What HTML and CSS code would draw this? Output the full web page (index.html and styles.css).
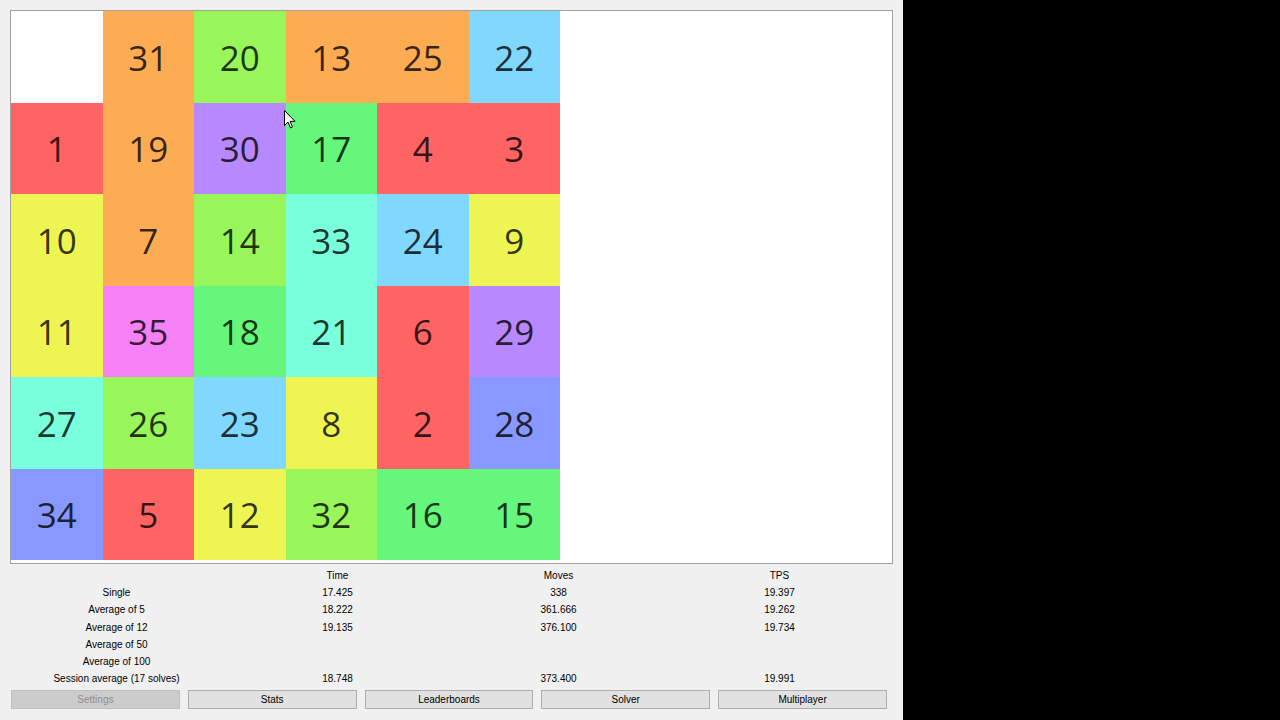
FILE: index.html
```html
<!DOCTYPE html>
<html>
<head>
<meta charset="utf-8">
<link rel="stylesheet" href="styles.css">
</head>
<body>
<div class="app">
  <div class="canvas">
    <div class="board">
      <div class="tile blank"></div>
      <div class="tile orange">31</div>
      <div class="tile lime">20</div>
      <div class="tile orange">13</div>
      <div class="tile orange">25</div>
      <div class="tile blue">22</div>

      <div class="tile red">1</div>
      <div class="tile orange">19</div>
      <div class="tile purple">30</div>
      <div class="tile green">17</div>
      <div class="tile red">4</div>
      <div class="tile red">3</div>

      <div class="tile yellow">10</div>
      <div class="tile orange">7</div>
      <div class="tile lime">14</div>
      <div class="tile cyan">33</div>
      <div class="tile blue">24</div>
      <div class="tile yellow">9</div>

      <div class="tile yellow">11</div>
      <div class="tile pink">35</div>
      <div class="tile green">18</div>
      <div class="tile cyan">21</div>
      <div class="tile red">6</div>
      <div class="tile purple">29</div>

      <div class="tile cyan">27</div>
      <div class="tile lime">26</div>
      <div class="tile blue">23</div>
      <div class="tile yellow">8</div>
      <div class="tile red">2</div>
      <div class="tile periwinkle">28</div>

      <div class="tile periwinkle">34</div>
      <div class="tile red">5</div>
      <div class="tile yellow">12</div>
      <div class="tile lime">32</div>
      <div class="tile green">16</div>
      <div class="tile green">15</div>
    </div>
    <svg class="cursor" width="12" height="19" viewBox="0 0 12 19">
      <path d="M0.5 0.5 L0.5 15.5 L4 12 L6.5 18 L8.5 17 L6 11.3 L11 11.3 Z" fill="#fff" stroke="#000" stroke-width="1" stroke-linejoin="round"/>
    </svg>
  </div>

  <div class="stats">
    <div></div><div>Time</div><div>Moves</div><div>TPS</div>
    <div>Single</div><div>17.425</div><div>338</div><div>19.397</div>
    <div>Average of 5</div><div>18.222</div><div>361.666</div><div>19.262</div>
    <div>Average of 12</div><div>19.135</div><div>376.100</div><div>19.734</div>
    <div>Average of 50</div><div></div><div></div><div></div>
    <div>Average of 100</div><div></div><div></div><div></div>
    <div>Session average (17 solves)</div><div>18.748</div><div>373.400</div><div>19.991</div>
  </div>

  <div class="buttons">
    <div class="btn disabled">Settings</div>
    <div class="btn">Stats</div>
    <div class="btn">Leaderboards</div>
    <div class="btn">Solver</div>
    <div class="btn">Multiplayer</div>
  </div>
</div>
</body>
</html>
```

FILE: styles.css
```css
html, body {
  margin: 0;
  padding: 0;
}
body {
  width: 1280px;
  height: 720px;
  background: #000;
  overflow: hidden;
  font-family: "Liberation Sans", Arial, sans-serif;
}
.app {
  width: 903px;
  height: 720px;
  box-sizing: border-box;
  background: #f0f0f0;
  padding: 10px 10px 0 10px;
  display: flex;
  flex-direction: column;
}
.canvas {
  position: relative;
  height: 554px;
  box-sizing: border-box;
  border: 1px solid #a0a0a0;
  background: #fff;
}
.board {
  display: grid;
  grid-template-columns: repeat(6, 91.5px);
  grid-template-rows: repeat(6, 91.5px);
  width: 549px;
}
.tile {
  display: flex;
  align-items: center;
  justify-content: center;
  padding-top: 1px;
  box-sizing: border-box;
  font-family: "Open Sans", "Noto Sans", sans-serif;
  font-size: 35px;
  color: rgba(0, 0, 0, 0.8);
}
.blank { background: #fff; }
.orange { background: #feac53; }
.lime { background: #98f65a; }
.blue { background: #80d8ff; }
.red { background: #ff6464; }
.purple { background: #b888ff; }
.green { background: #66f67b; }
.yellow { background: #eef552; }
.cyan { background: #79ffdc; }
.pink { background: #f680f6; }
.periwinkle { background: #8898ff; }

.cursor {
  position: absolute;
  left: 273px;
  top: 99px;
}

.stats {
  display: grid;
  grid-template-columns: repeat(4, 221px);
  grid-auto-rows: 17.2px;
  margin: 3px 0 0 -4px;
  font-size: 10px;
  color: #000;
  text-align: center;
  line-height: 17px;
}
.buttons {
  display: flex;
  gap: 8px;
  margin: 3px 6px 0 1px;
}
.btn {
  flex: 1;
  height: 19px;
  box-sizing: border-box;
  border: 1px solid #adadad;
  background: #e1e1e1;
  font-size: 10px;
  line-height: 17px;
  text-align: center;
  color: #000;
}
.btn.disabled {
  background: #cccccc;
  border-color: #bfbfbf;
  color: #8d8d8d;
}
```
